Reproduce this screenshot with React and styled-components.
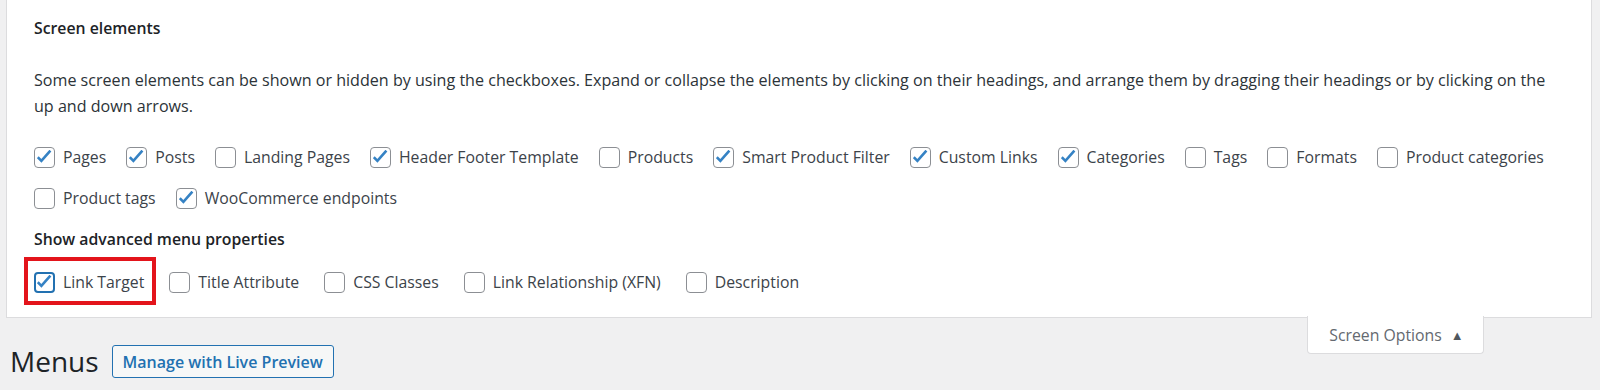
import React from "react";
import styled, { createGlobalStyle } from "styled-components";

const Global = createGlobalStyle`
  html, body { margin: 0; padding: 0; }
  body {
    background: #f0f0f1;
    font-family: "Open Sans", "Noto Sans", sans-serif;
    color: #3c434a;
    width: 1600px;
    height: 390px;
    overflow: hidden;
  }
`;

const Page = styled.div`
  padding: 0 8px 0 6px;
`;

const Panel = styled.section`
  position: relative;
  background: #fff;
  border: 1px solid #dcdcde;
  border-top: none;
  padding: 16px 26px 23px 27px;
`;

const Heading = styled.h5`
  margin: 0;
  font-size: 15.8px;
  line-height: 24px;
  font-weight: 600;
  color: #1d2327;
  margin-bottom: ${(p) => p.$after}px;
`;

const Description = styled.p`
  margin: 0 0 26px;
  font-size: 16.1px;
  line-height: 26px;
  color: #2c3338;
`;

const CheckList = styled.div`
  display: flex;
  flex-wrap: wrap;
  column-gap: ${(p) => p.$gap || 20}px;
  row-gap: 17px;
  margin-bottom: ${(p) => p.$after || 0}px;
`;

const Item = styled.label`
  position: relative;
  display: flex;
  align-items: center;
  gap: 8px;
  height: 24px;
  font-size: 15.8px;
  color: #3c434a;
  white-space: nowrap;
  ${(p) =>
    p.$highlight &&
    `
    &::after {
      content: "";
      position: absolute;
      left: -10px;
      right: -12px;
      top: -13px;
      bottom: -11px;
      border: 4px solid #e3141b;
      pointer-events: none;
    }
  `}
`;

const Box = styled.span`
  box-sizing: border-box;
  width: 21px;
  height: 21px;
  flex: none;
  border: ${(p) => (p.$focus ? "2px solid #2271b1" : "1px solid #8c8f94")};
  border-radius: 4px;
  background: #fff;
  display: flex;
  align-items: center;
  justify-content: center;
`;

const Check = () => (
  <svg width="15" height="14" viewBox="0 0 15 14" aria-hidden="true">
    <path
      d="M0.8 7.2 L4.4 10.8 L13.4 0.6"
      fill="none"
      stroke="#3582c4"
      strokeWidth="2.6"
      strokeLinejoin="miter"
    />
  </svg>
);

const Checkbox = ({ label, checked, highlight }) => (
  <Item $highlight={highlight}>
    <Box $focus={highlight}>{checked && <Check />}</Box>
    {label}
  </Item>
);

const Tab = styled.button`
  position: absolute;
  top: 100%;
  right: 107px;
  box-sizing: border-box;
  width: 177px;
  height: 38px;
  margin-top: -1px;
  background: #fff;
  border: 1px solid #dcdcde;
  border-top: none;
  border-radius: 0 0 4px 4px;
  font-family: "Open Sans", "Noto Sans", sans-serif;
  font-size: 15.8px;
  color: #646970;
  display: flex;
  align-items: center;
  justify-content: center;
  gap: 9px;
  padding: 0 0 0 2px;
`;

const Arrow = styled.span`
  font-size: 13px;
  color: #50575e;
`;

const TitleRow = styled.div`
  display: flex;
  align-items: center;
  gap: 13px;
  padding: 27px 0 0 4px;
`;

const Title = styled.h1`
  margin: 0;
  font-size: 28px;
  line-height: 33px;
  font-weight: 400;
  color: #1d2327;
`;

const Button = styled.a`
  box-sizing: border-box;
  display: inline-flex;
  align-items: center;
  height: 33px;
  padding: 0 10px;
  border: 1px solid #2271b1;
  border-radius: 3px;
  background: #f6f7f7;
  color: #2271b1;
  font-size: 16px;
  font-weight: 600;
  text-decoration: none;
`;

const elements = [
  ["Pages", true],
  ["Posts", true],
  ["Landing Pages", false],
  ["Header Footer Template", true],
  ["Products", false],
  ["Smart Product Filter", true],
  ["Custom Links", true],
  ["Categories", true],
  ["Tags", false],
  ["Formats", false],
  ["Product categories", false],
  ["Product tags", false],
  ["WooCommerce endpoints", true],
];

const advanced = [
  ["Link Target", true, true],
  ["Title Attribute", false],
  ["CSS Classes", false],
  ["Link Relationship (XFN)", false],
  ["Description", false],
];

export default function App() {
  return (
    <>
      <Global />
      <Page>
        <Panel>
          <Heading $after={27}>Screen elements</Heading>
          <Description>
            Some screen elements can be shown or hidden by using the checkboxes. Expand or collapse
            the elements by clicking on their headings, and arrange them by dragging their headings
            or by clicking on the up and down arrows.
          </Description>
          <CheckList $after={17}>
            {elements.map(([l, c]) => (
              <Checkbox key={l} label={l} checked={c} />
            ))}
          </CheckList>
          <Heading $after={19}>Show advanced menu properties</Heading>
          <CheckList $gap={25}>
            {advanced.map(([l, c, h]) => (
              <Checkbox key={l} label={l} checked={c} highlight={h} />
            ))}
          </CheckList>
          <Tab>
            Screen Options <Arrow>▲</Arrow>
          </Tab>
        </Panel>
        <TitleRow>
          <Title>Menus</Title>
          <Button href="#">Manage with Live Preview</Button>
        </TitleRow>
      </Page>
    </>
  );
}
